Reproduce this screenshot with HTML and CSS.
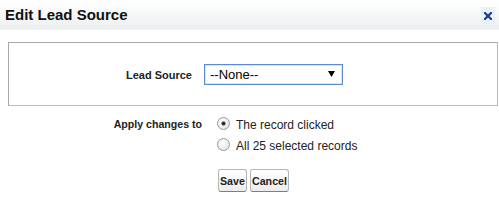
FILE: index.html
```html
<!DOCTYPE html>
<html lang="en">
<head>
  <meta charset="UTF-8">
  <meta name="viewport" content="width=device-width, initial-scale=1.0">
  <title>Edit Lead Source</title>
  <link rel="stylesheet" href="styles.css">
</head>
<body>
  <div class="dialog">
    <div class="dialog-header">
      <h2 class="dialog-title">Edit Lead Source</h2>
      <span class="close-btn" title="Close">
        <svg width="8" height="8" viewBox="0 0 8 8">
          <path d="M1 1 L7 7 M7 1 L1 7" stroke="#1b3c84" stroke-width="2.2" stroke-linecap="square"/>
        </svg>
      </span>
    </div>

    <div class="edit-box">
      <label class="field-label" for="leadSource">Lead Source</label>
      <span class="select-wrap">
        <select id="leadSource" class="field-select">
          <option>--None--</option>
          <option>Web</option>
          <option>Phone Inquiry</option>
          <option>Partner Referral</option>
        </select>
        <svg class="select-arrow" width="7" height="6" viewBox="0 0 7 6">
          <path d="M0 0 H7 L3.5 6 Z" fill="#000"/>
        </svg>
      </span>
    </div>

    <div class="apply">
      <span class="apply-label">Apply changes to</span>
      <div class="apply-options">
        <label class="option">
          <span class="radio checked"></span>
          The record clicked
        </label>
        <label class="option">
          <span class="radio"></span>
          All 25 selected records
        </label>
      </div>
    </div>

    <div class="buttons">
      <button class="btn">Save</button>
      <button class="btn">Cancel</button>
    </div>
  </div>
</body>
</html>
```

FILE: styles.css
```css
body {
  margin: 0;
  font-family: Arial, "Liberation Sans", sans-serif;
  color: #000;
  background: #fff;
}

div.dialog {
  width: 499px;
}

div.dialog-header {
  height: 29px;
  display: flex;
  align-items: center;
  justify-content: space-between;
  padding-left: 5px;
  padding-right: 4px;
  background: linear-gradient(#ffffff, #eceff0);
  border-bottom: 1px solid #f1f2f3;
}
.dialog-title {
  margin: 0;
  font-size: 15px;
  font-weight: bold;
  color: #111;
}
.close-btn {
  width: 14px;
  height: 18px;
  display: flex;
  align-items: center;
  justify-content: center;
  background: #eaf1fa;
  margin-top: 2px;
  cursor: pointer;
}

div.edit-box {
  margin: 12px 1px 0 8px;
  border: 1px solid #a8a8a8;
  border-right-color: #bcbcbc;
  border-bottom-color: #bcbcbc;
  padding: 21px 0 20px;
  display: grid;
  grid-template-columns: 195px auto;
  align-items: center;
}
.field-label {
  text-align: right;
  padding-right: 12px;
  font-size: 11px;
  font-weight: bold;
  color: #222;
}
.select-wrap {
  position: relative;
  width: 139px;
  height: 21px;
}
.field-select {
  appearance: none;
  -webkit-appearance: none;
  width: 139px;
  height: 21px;
  margin: 0;
  padding: 0 0 0 5px;
  border: 1px solid #5b8bd3;
  box-shadow: inset 0 0 0 1px #d6e4f7;
  border-radius: 0;
  background: #fff;
  font-family: Arial, "Liberation Sans", sans-serif;
  font-size: 13px;
  color: #000;
  outline: none;
}
.select-arrow {
  position: absolute;
  right: 8px;
  top: 7px;
  pointer-events: none;
}

div.apply {
  margin: 8px 0 0 8px;
  display: grid;
  grid-template-columns: 197px auto;
}
.apply-label {
  text-align: right;
  padding-right: 3px;
  font-size: 10.6px;
  font-weight: bold;
  line-height: 21px;
  color: #222;
}
.apply-options {
  display: flex;
  flex-direction: column;
}
.option {
  display: flex;
  align-items: center;
  height: 21px;
  padding-left: 12px;
  font-size: 12px;
  color: #222;
  cursor: pointer;
}
.radio {
  width: 11px;
  height: 11px;
  margin-right: 6px;
  border: 1px solid #9a9b9b;
  border-radius: 50%;
  background: radial-gradient(circle at 40% 35%, #ffffff, #e8e8e8 70%, #d6d6d6);
  box-sizing: content-box;
  position: relative;
  top: -1px;
}
.radio.checked {
  background:
    radial-gradient(circle, #222 0, #333 1.5px, transparent 2.5px),
    radial-gradient(circle at 40% 35%, #ffffff, #e8e8e8 70%, #d6d6d6);
}

div.buttons {
  margin: 13px 0 0 8px;
  display: flex;
  justify-content: center;
  gap: 3px;
}
.btn {
  height: 23px;
  padding: 0 1px;
  font-family: Arial, "Liberation Sans", sans-serif;
  font-size: 10.7px;
  font-weight: bold;
  color: #222;
  background: linear-gradient(#ffffff, #ececec);
  border: 1px solid #b5b5b5;
  border-bottom-color: #7f7f7f;
  border-radius: 3px;
  cursor: pointer;
}
```
